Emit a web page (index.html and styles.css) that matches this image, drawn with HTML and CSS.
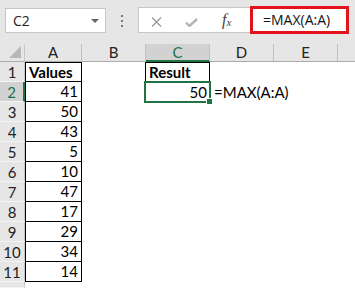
FILE: index.html
```html
<!DOCTYPE html>
<html lang="en">
<head>
    <meta charset="UTF-8">
    <title>MAX</title>
    <link rel="stylesheet" href="styles.css">
</head>
<body>
<div class="bar">
    <div class="namebox">
        <span>C2</span>
        <i class="arrow"></i>
    </div>
    <div class="dots"><b></b><b></b><b></b></div>
    <div class="fbox">
        <div class="btns">
            <svg class="x" width="11" height="10" viewBox="0 0 11 10"><path d="M1 0.5L10 9.5M10 0.5L1 9.5" stroke="#9c9c9c" stroke-width="1.4" fill="none"/></svg>
            <svg class="ok" width="13" height="9" viewBox="0 0 13 9"><path d="M1 4.5L4.5 8L12 1" stroke="#b4b4b4" stroke-width="2.4" fill="none"/></svg>
            <span class="fx">f<sub>x</sub></span>
        </div>
        <div class="formula">=MAX(A:A)</div>
    </div>
</div>

<div class="sheet">
    <div class="corner"></div>
    <div class="ch">A</div>
    <div class="ch">B</div>
    <div class="ch sel">C</div>
    <div class="ch">D</div>
    <div class="ch">E</div>
    <div class="ch last"></div>

    <div class="rh">1</div>
    <div class="c a top bold">Values</div>
    <div class="c"></div>
    <div class="c res bold">Result</div>
    <div class="c"></div>
    <div class="c"></div>
    <div class="c"></div>

    <div class="rh sel">2</div>
    <div class="c a num">41</div>
    <div class="c"></div>
    <div class="c num active">50</div>
    <div class="c over">=MAX(A:A)</div>
    <div class="c"></div>
    <div class="c"></div>

    <div class="rh">3</div><div class="c a num">50</div><div class="c"></div><div class="c"></div><div class="c"></div><div class="c"></div><div class="c"></div>
    <div class="rh">4</div><div class="c a num">43</div><div class="c"></div><div class="c"></div><div class="c"></div><div class="c"></div><div class="c"></div>
    <div class="rh">5</div><div class="c a num">5</div><div class="c"></div><div class="c"></div><div class="c"></div><div class="c"></div><div class="c"></div>
    <div class="rh">6</div><div class="c a num">10</div><div class="c"></div><div class="c"></div><div class="c"></div><div class="c"></div><div class="c"></div>
    <div class="rh">7</div><div class="c a num">47</div><div class="c"></div><div class="c"></div><div class="c"></div><div class="c"></div><div class="c"></div>
    <div class="rh">8</div><div class="c a num">17</div><div class="c"></div><div class="c"></div><div class="c"></div><div class="c"></div><div class="c"></div>
    <div class="rh">9</div><div class="c a num">29</div><div class="c"></div><div class="c"></div><div class="c"></div><div class="c"></div><div class="c"></div>
    <div class="rh">10</div><div class="c a num">34</div><div class="c"></div><div class="c"></div><div class="c"></div><div class="c"></div><div class="c"></div>
    <div class="rh">11</div><div class="c a num">14</div><div class="c"></div><div class="c"></div><div class="c"></div><div class="c"></div><div class="c"></div>
    <div class="rh"></div>
</div>
</body>
</html>
```
FILE: styles.css
```css
*{
    margin: 0;
    padding: 0;
    box-sizing: border-box;
}

body{
    width: 355px;
    height: 288px;
    overflow: hidden;
    background: #ffffff;
    font-family: Lato, "Liberation Sans", sans-serif;
}

/* formula bar */
.bar{
    height: 44px;
    background: #e6e6e6;
    display: flex;
    align-items: flex-start;
    padding: 8px 6px 0 5px;
}

.namebox{
    width: 101px;
    height: 25px;
    background: #ffffff;
    border: 1px solid #c6c6c6;
    display: flex;
    align-items: center;
    justify-content: space-between;
    padding: 0 6px 0 7px;
    font-family: "Open Sans", sans-serif;
    font-size: 14px;
    color: #222222;
}

.arrow{
    width: 0;
    height: 0;
    border-left: 4px solid transparent;
    border-right: 4px solid transparent;
    border-top: 4px solid #666666;
}

.dots{
    width: 32px;
    height: 25px;
    display: flex;
    flex-direction: column;
    align-items: center;
    justify-content: center;
    gap: 3px;
}

.dots b{
    width: 2px;
    height: 2px;
    background: #777777;
}

.fbox{
    flex: 1;
    height: 26px;
    margin-top: -1px;
    background: #ffffff;
    border: 1px solid #c6c6c6;
    display: flex;
}

.btns{
    width: 111px;
    display: flex;
    align-items: center;
}

.btns .x{
    margin-left: 12px;
    margin-top: 4px;
}

.btns .ok{
    margin-left: 23px;
    margin-top: 4px;
}

.btns .fx{
    margin-left: 24px;
    font-family: "Liberation Serif", serif;
    font-style: italic;
    font-size: 16px;
    color: #444444;
}

.btns .fx sub{
    font-size: 11px;
    vertical-align: -1px;
}

.formula{
    flex: 1;
    margin: -2px -1px -2px 0;
    border: 3px solid #e3131d;
    padding-left: 10px;
    font-family: "Open Sans", sans-serif;
    font-size: 14px;
    line-height: 22px;
    color: #111111;
}

/* grid */
.sheet{
    display: grid;
    grid-template-columns: 25px 57px 64px 64px 64px 64px 17px;
    grid-template-rows: 18px repeat(11, 20px) 6px;
}

.corner{
    background: #e6e6e6;
    border-right: 1px solid #c8c8c8;
    border-bottom: 1px solid #ababab;
    position: relative;
}

.corner::after{
    content: "";
    position: absolute;
    right: 3px;
    bottom: 3px;
    border-left: 12px solid transparent;
    border-bottom: 12px solid #b8b8b8;
}

.ch{
    background: #e6e6e6;
    border-right: 1px solid #c0c0c0;
    border-bottom: 1px solid #ababab;
    text-align: center;
    font-size: 15px;
    line-height: 17px;
    color: #222222;
}

.ch.last{
    border-right: none;
}

.ch.sel{
    background: #d2d2d2;
    color: #217346;
    border-bottom: 2px solid #217346;
}

.rh{
    background: #e6e6e6;
    border-bottom: 1px solid #f4f4f4;
    border-right: 1px solid #c8c8c8;
    text-align: center;
    font-size: 15px;
    line-height: 20px;
    color: #222222;
}

.rh.sel{
    background: #d2d2d2;
    color: #217346;
    border-right: 2px solid #217346;
}

.c{
    font-size: 15px;
    line-height: 19px;
    color: #000000;
    padding: 0 3px;
    white-space: nowrap;
}

.a{
    border-right: 1px solid #000000;
    border-bottom: 1px solid #000000;
    border-left: 1px solid #000000;
}

.a.top, .res{
    border-top: 1px solid #000000;
}

.res{
    border-left: 1px solid #000000;
    border-right: 1px solid #000000;
    margin-left: -1px;
}

.bold{
    font-weight: bold;
}

.num{
    text-align: right;
}

.active{
    position: relative;
    outline: 2px solid #217346;
    outline-offset: -1px;
    margin-left: -1px;
    line-height: 20px;
}

.active::after{
    content: "";
    position: absolute;
    right: -3px;
    bottom: -3px;
    width: 5px;
    height: 5px;
    background: #217346;
    border: 1px solid #ffffff;
}

.over{
    overflow: visible;
    padding-left: 4px;
    line-height: 20px;
}
```
